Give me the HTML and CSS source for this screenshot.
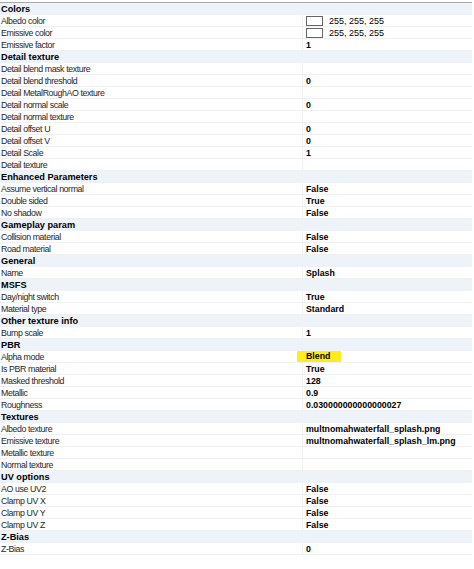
FILE: index.html
```html
<!DOCTYPE html>
<html lang="en">
<head>
    <meta charset="UTF-8">
    <meta name="viewport" content="width=device-width, initial-scale=1.0">
    <title>Material properties</title>
    <link rel="stylesheet" href="styles.css">
</head>
<body>
    <div class="grid">
        <div class="cat">Colors</div>
        <div class="row"><span class="name">Albedo color</span><span class="value"><span class="swatch"></span><span class="rgb">255, 255, 255</span></span></div>
        <div class="row"><span class="name">Emissive color</span><span class="value"><span class="swatch"></span><span class="rgb">255, 255, 255</span></span></div>
        <div class="row"><span class="name">Emissive factor</span><span class="value">1</span></div>

        <div class="cat">Detail texture</div>
        <div class="row"><span class="name">Detail blend mask texture</span><span class="value"></span></div>
        <div class="row"><span class="name">Detail blend threshold</span><span class="value">0</span></div>
        <div class="row"><span class="name">Detail MetalRoughAO texture</span><span class="value"></span></div>
        <div class="row"><span class="name">Detail normal scale</span><span class="value">0</span></div>
        <div class="row"><span class="name">Detail normal texture</span><span class="value"></span></div>
        <div class="row"><span class="name">Detail offset U</span><span class="value">0</span></div>
        <div class="row"><span class="name">Detail offset V</span><span class="value">0</span></div>
        <div class="row"><span class="name">Detail Scale</span><span class="value">1</span></div>
        <div class="row"><span class="name">Detail texture</span><span class="value"></span></div>

        <div class="cat">Enhanced Parameters</div>
        <div class="row"><span class="name">Assume vertical normal</span><span class="value">False</span></div>
        <div class="row"><span class="name">Double sided</span><span class="value">True</span></div>
        <div class="row"><span class="name">No shadow</span><span class="value">False</span></div>

        <div class="cat">Gameplay param</div>
        <div class="row"><span class="name">Collision material</span><span class="value">False</span></div>
        <div class="row"><span class="name">Road material</span><span class="value">False</span></div>

        <div class="cat">General</div>
        <div class="row"><span class="name">Name</span><span class="value">Splash</span></div>

        <div class="cat">MSFS</div>
        <div class="row"><span class="name">Day/night switch</span><span class="value">True</span></div>
        <div class="row"><span class="name">Material type</span><span class="value">Standard</span></div>

        <div class="cat">Other texture info</div>
        <div class="row"><span class="name">Bump scale</span><span class="value">1</span></div>

        <div class="cat">PBR</div>
        <div class="row"><span class="name">Alpha mode</span><span class="value"><span class="marker">Blend</span></span></div>
        <div class="row"><span class="name">Is PBR material</span><span class="value">True</span></div>
        <div class="row"><span class="name">Masked threshold</span><span class="value">128</span></div>
        <div class="row"><span class="name">Metallic</span><span class="value">0.9</span></div>
        <div class="row"><span class="name">Roughness</span><span class="value">0.030000000000000027</span></div>

        <div class="cat">Textures</div>
        <div class="row"><span class="name">Albedo texture</span><span class="value">multnomahwaterfall_splash.png</span></div>
        <div class="row"><span class="name">Emissive texture</span><span class="value">multnomahwaterfall_splash_lm.png</span></div>
        <div class="row"><span class="name">Metallic texture</span><span class="value"></span></div>
        <div class="row"><span class="name">Normal texture</span><span class="value"></span></div>

        <div class="cat">UV options</div>
        <div class="row"><span class="name">AO use UV2</span><span class="value">False</span></div>
        <div class="row"><span class="name">Clamp UV X</span><span class="value">False</span></div>
        <div class="row"><span class="name">Clamp UV Y</span><span class="value">False</span></div>
        <div class="row"><span class="name">Clamp UV Z</span><span class="value">False</span></div>

        <div class="cat">Z-Bias</div>
        <div class="row"><span class="name">Z-Bias</span><span class="value">0</span></div>
    </div>
</body>
</html>
```
FILE: styles.css
```css
body {
    margin: 0;
    background-color: #fff;
    font-family: 'Liberation Sans', Arial, sans-serif;
    color: #111;
}
.grid {
    margin-top: 2px;
    border-top: 1px solid #a8a8a8;
    width: 472px;
}
.cat {
    height: 12px;
    line-height: 12px;
    padding-left: 1px;
    background-color: #eef3f9;
    font-weight: bold;
    font-size: 9.2px;
    color: #000;
}
.row {
    display: flex;
    height: 12px;
    line-height: 12px;
    box-sizing: border-box;
    border-bottom: 1px solid #f0f0f0;
}
.name {
    width: 303px;
    padding-left: 1px;
    box-sizing: border-box;
    border-right: 1px solid #f0f0f0;
    font-size: 8.8px;
    letter-spacing: -0.4px;
    color: #1e1e1e;
    white-space: nowrap;
}
.value {
    flex: 1;
    display: flex;
    align-items: center;
    padding-left: 3px;
    font-weight: bold;
    font-size: 8.8px;
    color: #000;
    white-space: nowrap;
}
.swatch {
    width: 15px;
    height: 8px;
    border: 1px solid #666;
    background-color: #fff;
    margin-right: 6px;
}
.rgb {
    font-weight: normal;
    font-size: 9px;
}
.marker {
    background-color: #ffec1a;
    margin-left: -9px;
    padding: 0 11px 0 9px;
    line-height: 11px;
    border-radius: 1px;
}
```
